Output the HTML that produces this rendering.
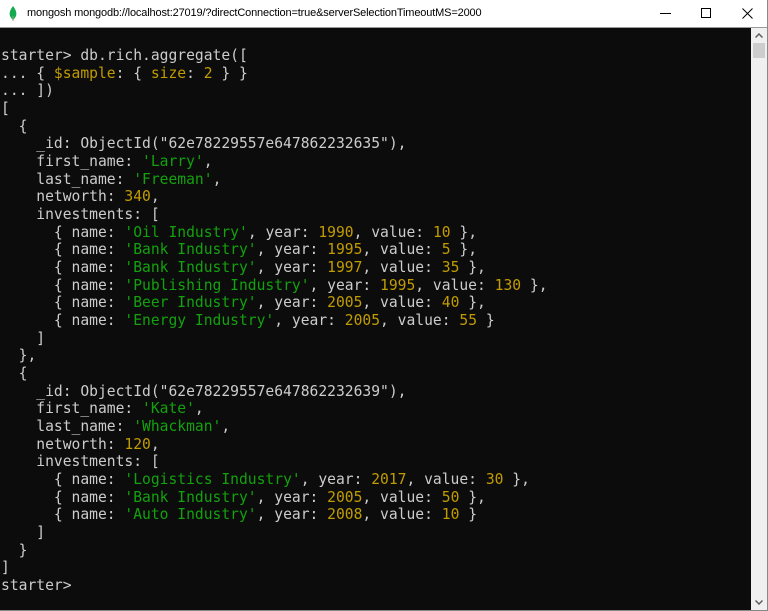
<!DOCTYPE html>
<html><head><style>
html,body{margin:0;padding:0;width:768px;height:611px;overflow:hidden;background:#fff;}
.win{position:absolute;left:0;top:0;width:767px;height:610px;border-right:1px solid #888;border-bottom:1px solid #888;}
.title{position:absolute;left:0;top:0;width:767px;height:27px;background:#fff;border-bottom:1px solid #999;}
.title .t{position:absolute;left:27px;top:7px;font:11px "Liberation Sans",sans-serif;letter-spacing:-0.15px;color:#000;}
.term{position:absolute;left:0;top:28px;width:751px;height:582px;background:#0c0c0c;}
.sb{position:absolute;left:751px;top:28px;width:16px;height:582px;background:#f0f0f0;}
.thumb{position:absolute;left:2px;top:15px;width:12px;height:15px;background:#cdcdcd;}
pre{position:absolute;left:1px;top:47px;margin:0;font:14.65px/17.67px "DejaVu Sans Mono",monospace;color:#cccccc;}
.g{color:#13a10e}.y{color:#c19c00}
</style></head><body>
<div class="win">
<div class="title">
<svg style="position:absolute;left:9px;top:6px" width="8" height="15" viewBox="0 0 8 15"><path d="M4 0C1 4 0 7 1 10c1 2 2 3 3 4 1-1 2-2 3-4 1-3 0-6-3-10z" fill="#13aa52"/><path d="M4 10v5" stroke="#8a6" stroke-width="1"/></svg>
<div class="t">mongosh mongodb://localhost:27019/?directConnection=true&amp;serverSelectionTimeoutMS=2000</div>
<svg style="position:absolute;left:660px;top:13px" width="12" height="2"><rect width="11" height="1" fill="#000"/></svg>
<svg style="position:absolute;left:701px;top:8px" width="11" height="11"><rect x=".5" y=".5" width="9" height="9" fill="none" stroke="#000"/></svg>
<svg style="position:absolute;left:742px;top:8px" width="11" height="11"><path d="M.5 .5L10.5 10.5M10.5 .5L.5 10.5" stroke="#000"/></svg>
</div>
<div class="term"></div>
<div class="sb"><div class="thumb"></div>
<svg style="position:absolute;left:4px;top:5px" width="8" height="5"><path d="M.5 4.5L4 1l3.5 3.5" stroke="#606060" fill="none" stroke-width="1.5"/></svg>
<svg style="position:absolute;left:4px;top:572px" width="8" height="5"><path d="M.5 .5L4 4l3.5-3.5" stroke="#606060" fill="none" stroke-width="1.5"/></svg>
</div>
<pre>starter&gt; db.rich.aggregate([
... { <span class="y">$sample</span>: { <span class="y">size</span>: <span class="y">2</span> } }
... ])
[
  {
    _id: ObjectId("62e78229557e647862232635"),
    first_name: <span class="g">'Larry'</span>,
    last_name: <span class="g">'Freeman'</span>,
    networth: <span class="y">340</span>,
    investments: [
      { name: <span class="g">'Oil Industry'</span>, year: <span class="y">1990</span>, value: <span class="y">10</span> },
      { name: <span class="g">'Bank Industry'</span>, year: <span class="y">1995</span>, value: <span class="y">5</span> },
      { name: <span class="g">'Bank Industry'</span>, year: <span class="y">1997</span>, value: <span class="y">35</span> },
      { name: <span class="g">'Publishing Industry'</span>, year: <span class="y">1995</span>, value: <span class="y">130</span> },
      { name: <span class="g">'Beer Industry'</span>, year: <span class="y">2005</span>, value: <span class="y">40</span> },
      { name: <span class="g">'Energy Industry'</span>, year: <span class="y">2005</span>, value: <span class="y">55</span> }
    ]
  },
  {
    _id: ObjectId("62e78229557e647862232639"),
    first_name: <span class="g">'Kate'</span>,
    last_name: <span class="g">'Whackman'</span>,
    networth: <span class="y">120</span>,
    investments: [
      { name: <span class="g">'Logistics Industry'</span>, year: <span class="y">2017</span>, value: <span class="y">30</span> },
      { name: <span class="g">'Bank Industry'</span>, year: <span class="y">2005</span>, value: <span class="y">50</span> },
      { name: <span class="g">'Auto Industry'</span>, year: <span class="y">2008</span>, value: <span class="y">10</span> }
    ]
  }
]
starter&gt; </pre>
</div>
</body></html>
